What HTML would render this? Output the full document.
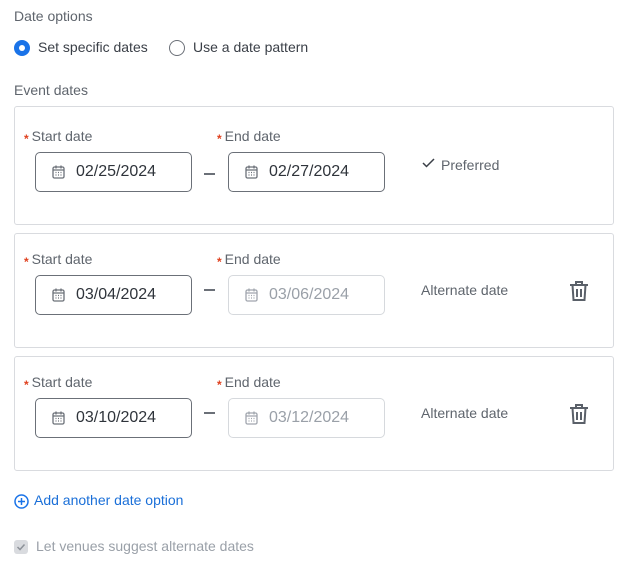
<!DOCTYPE html>
<html><head><style>
*{box-sizing:border-box;margin:0;padding:0}
body{width:628px;height:572px;background:#fff;font-family:"Liberation Sans",sans-serif;position:relative;overflow:hidden;color:#3a3f47}
.a{position:absolute;white-space:nowrap}
.t{font-size:14px;color:#5f656d}
.panel{position:absolute;left:14px;width:600px;border:1px solid #d9dbdf;border-radius:3px}
.lbl{font-size:14px;color:#5f656d}
.lbl b{color:#e0411f;font-weight:bold;font-size:12px;margin-right:3px;position:relative;top:2px}
.inp{position:absolute;width:157px;height:40px;border:1px solid #6b7078;border-radius:5px;font-size:16px;color:#2f343b}
.inp.dis{border-color:#d6d9dd;color:#9aa0a8}
.inp svg{position:absolute;left:16px;top:12px}
.inp span{position:absolute;left:40px;top:10px}
.dash{position:absolute;width:11px;height:1.5px;background:#6b7078}
</style></head><body>
<div class="a t" style="left:14px;top:8px">Date options</div>
<div class="a" style="left:14px;top:40px;width:16px;height:16px;border-radius:50%;background:#1a73e8"><div style="position:absolute;left:5px;top:5px;width:6px;height:6px;border-radius:50%;background:#fff"></div></div>
<div class="a" style="left:38px;top:39px;font-size:14px;color:#3a3f47">Set specific dates</div>
<div class="a" style="left:169px;top:40px;width:16px;height:16px;border-radius:50%;border:1px solid #6b7078"></div>
<div class="a" style="left:193px;top:39px;font-size:14px;color:#3a3f47">Use a date pattern</div>
<div class="a t" style="left:14px;top:82px">Event dates</div>

<div class="panel" style="top:106px;height:119px"></div>
<div class="panel" style="top:233px;height:115px"></div>
<div class="panel" style="top:356px;height:115px"></div>

<div class="a lbl" style="left:24px;top:128px"><b>*</b>Start date</div>
<div class="a lbl" style="left:217px;top:128px"><b>*</b>End date</div>
<div class="inp" style="left:35px;top:152px"><svg width="13" height="14" viewBox="0 0 13 14"><rect x="1" y="2" width="11" height="11" rx="1.5" fill="none" stroke="#6b7078" stroke-width="1.3"/><path d="M1 5h11M4 0.5v3M9 0.5v3" stroke="#6b7078" stroke-width="1.3"/><path d="M3.5 7.5h1M6 7.5h1M8.5 7.5h1M3.5 10h1M6 10h1M8.5 10h1" stroke="#6b7078" stroke-width="1.2"/></svg><span>02/25/2024</span></div>
<div class="dash" style="left:204px;top:173px"></div>
<div class="inp" style="left:228px;top:152px"><svg width="13" height="14" viewBox="0 0 13 14"><rect x="1" y="2" width="11" height="11" rx="1.5" fill="none" stroke="#6b7078" stroke-width="1.3"/><path d="M1 5h11M4 0.5v3M9 0.5v3" stroke="#6b7078" stroke-width="1.3"/><path d="M3.5 7.5h1M6 7.5h1M8.5 7.5h1M3.5 10h1M6 10h1M8.5 10h1" stroke="#6b7078" stroke-width="1.2"/></svg><span>02/27/2024</span></div>
<svg class="a" style="left:422px;top:158px" width="13" height="10" viewBox="0 0 13 10"><path d="M1 5l3.5 3.5L12 1" fill="none" stroke="#3a3f47" stroke-width="1.5"/></svg>
<div class="a" style="left:441px;top:157px;font-size:14px;color:#5f656d">Preferred</div>

<div class="a lbl" style="left:24px;top:251px"><b>*</b>Start date</div>
<div class="a lbl" style="left:217px;top:251px"><b>*</b>End date</div>
<div class="inp" style="left:35px;top:275px"><svg width="13" height="14" viewBox="0 0 13 14"><rect x="1" y="2" width="11" height="11" rx="1.5" fill="none" stroke="#6b7078" stroke-width="1.3"/><path d="M1 5h11M4 0.5v3M9 0.5v3" stroke="#6b7078" stroke-width="1.3"/><path d="M3.5 7.5h1M6 7.5h1M8.5 7.5h1M3.5 10h1M6 10h1M8.5 10h1" stroke="#6b7078" stroke-width="1.2"/></svg><span>03/04/2024</span></div>
<div class="dash" style="left:204px;top:289px"></div>
<div class="inp dis" style="left:228px;top:275px"><svg width="13" height="14" viewBox="0 0 13 14"><rect x="1" y="2" width="11" height="11" rx="1.5" fill="none" stroke="#a0a5ad" stroke-width="1.3"/><path d="M1 5h11M4 0.5v3M9 0.5v3" stroke="#a0a5ad" stroke-width="1.3"/><path d="M3.5 7.5h1M6 7.5h1M8.5 7.5h1M3.5 10h1M6 10h1M8.5 10h1" stroke="#a0a5ad" stroke-width="1.2"/></svg><span>03/06/2024</span></div>
<div class="a" style="left:421px;top:282px;font-size:14px;color:#5f656d">Alternate date</div>
<svg class="a" style="left:569px;top:280px" width="20" height="22" viewBox="0 0 20 22"><path d="M1 5h18M7 5V2h6v3M3.5 5l1 15h11l1-15M8 9v8M12 9v8" fill="none" stroke="#5a6069" stroke-width="2"/></svg>

<div class="a lbl" style="left:24px;top:374px"><b>*</b>Start date</div>
<div class="a lbl" style="left:217px;top:374px"><b>*</b>End date</div>
<div class="inp" style="left:35px;top:398px"><svg width="13" height="14" viewBox="0 0 13 14"><rect x="1" y="2" width="11" height="11" rx="1.5" fill="none" stroke="#6b7078" stroke-width="1.3"/><path d="M1 5h11M4 0.5v3M9 0.5v3" stroke="#6b7078" stroke-width="1.3"/><path d="M3.5 7.5h1M6 7.5h1M8.5 7.5h1M3.5 10h1M6 10h1M8.5 10h1" stroke="#6b7078" stroke-width="1.2"/></svg><span>03/10/2024</span></div>
<div class="dash" style="left:204px;top:412px"></div>
<div class="inp dis" style="left:228px;top:398px"><svg width="13" height="14" viewBox="0 0 13 14"><rect x="1" y="2" width="11" height="11" rx="1.5" fill="none" stroke="#a0a5ad" stroke-width="1.3"/><path d="M1 5h11M4 0.5v3M9 0.5v3" stroke="#a0a5ad" stroke-width="1.3"/><path d="M3.5 7.5h1M6 7.5h1M8.5 7.5h1M3.5 10h1M6 10h1M8.5 10h1" stroke="#a0a5ad" stroke-width="1.2"/></svg><span>03/12/2024</span></div>
<div class="a" style="left:421px;top:405px;font-size:14px;color:#5f656d">Alternate date</div>
<svg class="a" style="left:569px;top:403px" width="20" height="22" viewBox="0 0 20 22"><path d="M1 5h18M7 5V2h6v3M3.5 5l1 15h11l1-15M8 9v8M12 9v8" fill="none" stroke="#5a6069" stroke-width="2"/></svg>

<svg class="a" style="left:14px;top:494px" width="15" height="15" viewBox="0 0 15 15"><circle cx="7.5" cy="7.5" r="6.5" fill="none" stroke="#1a73e8" stroke-width="1.5"/><path d="M7.5 4v7M4 7.5h7" stroke="#1a73e8" stroke-width="1.5"/></svg>
<div class="a" style="left:34px;top:492px;font-size:14px;color:#1a6fd8">Add another date option</div>
<div class="a" style="left:14px;top:540px;width:14px;height:14px;border-radius:3px;background:#d9dbdf"><svg width="14" height="14" viewBox="0 0 14 14" style="position:absolute;left:0;top:0"><path d="M3.5 7l2.5 2.5 4.5-5" fill="none" stroke="#8d9299" stroke-width="1.5"/></svg></div>
<div class="a" style="left:36px;top:538px;font-size:14px;color:#9aa0a8">Let venues suggest alternate dates</div>
</body></html>
